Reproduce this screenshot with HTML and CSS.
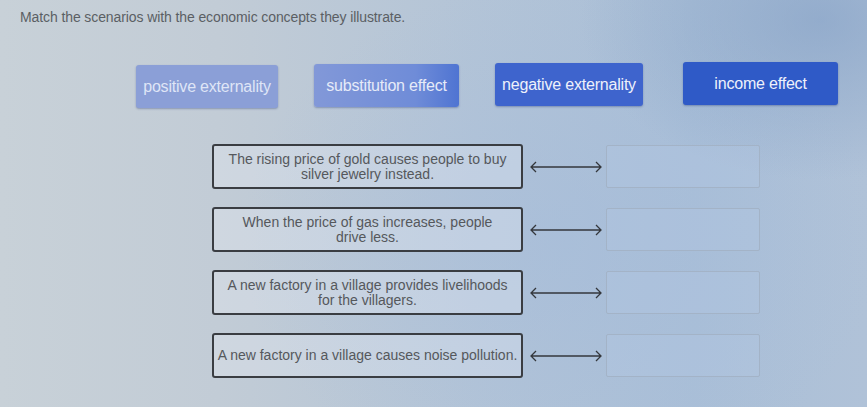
FILE: index.html
```html
<!DOCTYPE html>
<html lang="en">
<head>
<meta charset="UTF-8">
<meta name="viewport" content="width=device-width,initial-scale=1.0">
<title>Match the scenarios</title>
<link rel="stylesheet" href="styles.css">
</head>
<body>
<p class="consigne">Match the scenarios with the economic concepts they illustrate.</p>

<div class="choix">
    <button class="tuile utilise">positive externality</button>
    <button class="tuile moyen">substitution effect</button>
    <button class="tuile">negative externality</button>
    <button class="tuile large">income effect</button>
</div>

<div class="paires">
    <div class="paire">
        <div class="scenario">The rising price of gold causes people to buy<br>silver jewelry instead.</div>
        <svg class="fleche" viewBox="0 0 72 12"><path d="M1 6H71M6 1L1 6L6 11M66 1L71 6L66 11"/></svg>
        <div class="cible"></div>
    </div>
    <div class="paire">
        <div class="scenario">When the price of gas increases, people<br>drive less.</div>
        <svg class="fleche" viewBox="0 0 72 12"><path d="M1 6H71M6 1L1 6L6 11M66 1L71 6L66 11"/></svg>
        <div class="cible"></div>
    </div>
    <div class="paire">
        <div class="scenario">A new factory in a village provides livelihoods<br>for the villagers.</div>
        <svg class="fleche" viewBox="0 0 72 12"><path d="M1 6H71M6 1L1 6L6 11M66 1L71 6L66 11"/></svg>
        <div class="cible"></div>
    </div>
    <div class="paire">
        <div class="scenario">A new factory in a village causes noise pollution.</div>
        <svg class="fleche" viewBox="0 0 72 12"><path d="M1 6H71M6 1L1 6L6 11M66 1L71 6L66 11"/></svg>
        <div class="cible"></div>
    </div>
</div>
</body>
</html>
```

FILE: styles.css
```css
html, body {
    height: 100%;
}

body {
    margin: 0;
    font-family: "Liberation Sans", Arial, sans-serif;
    color: #505050;
    background:
        radial-gradient(ellipse 240px 160px at 820px 20px, rgba(125, 155, 195, 0.55), rgba(125, 155, 195, 0)),
        radial-gradient(ellipse 320px 260px at 560px 240px, rgba(160, 185, 220, 0.4), rgba(160, 185, 220, 0)),
        linear-gradient(90deg, #c8d1d8 0%, #c2ccd6 25%, #b3c4d7 55%, #aabfd7 80%, #b0c2d8 100%);
    overflow: hidden;
}

.consigne {
    margin: 0;
    padding: 9px 0 0 20px;
    font-size: 14px;
    line-height: 16px;
    letter-spacing: -0.1px;
    color: #5b5f64;
}

.choix {
    display: flex;
    align-items: flex-start;
    gap: 36px;
    padding-left: 136px;
    margin-top: 38px;
}

.tuile {
    width: 148px;
    height: 43px;
    border: none;
    border-radius: 3px;
    background: #3e64cd;
    color: #eef1fb;
    font-family: inherit;
    font-size: 16px;
    letter-spacing: -0.2px;
    box-shadow: 0 1px 2px rgba(30, 50, 110, 0.35);
}

.tuile.utilise {
    width: 142px;
    margin-top: 2px;
    background: #8b9fd7;
    color: #dfe5f6;
}

.tuile.moyen {
    width: 145px;
    margin-top: 1px;
    background: linear-gradient(90deg, #8298d8, #6f8cd8 70%, #4f74d2);
    color: #e6ebf8;
}

.tuile.large {
    width: 155px;
    margin-left: 4px;
    margin-top: -1px;
    background: #2f5ac7;
}

.paires {
    display: flex;
    flex-direction: column;
    gap: 18px;
    padding-left: 212px;
    margin-top: 36px;
}

.paire {
    display: flex;
    align-items: center;
}

.scenario {
    box-sizing: border-box;
    width: 311px;
    height: 45px;
    display: flex;
    align-items: center;
    justify-content: center;
    padding: 0 3px;
    border: 2px solid #3a3d42;
    border-radius: 3px;
    background: rgba(238, 242, 247, 0.3);
    font-size: 14px;
    line-height: 15px;
    text-align: center;
    white-space: nowrap;
    color: #55585c;
}

.fleche {
    width: 72px;
    height: 12px;
    margin: 0 4px 0 7px;
    fill: none;
    stroke: #34373c;
    stroke-width: 1.3;
}

.cible {
    box-sizing: border-box;
    width: 154px;
    height: 43px;
    border: 1px solid #a3b3c7;
    border-radius: 2px;
    background: rgba(185, 205, 230, 0.25);
}
```
